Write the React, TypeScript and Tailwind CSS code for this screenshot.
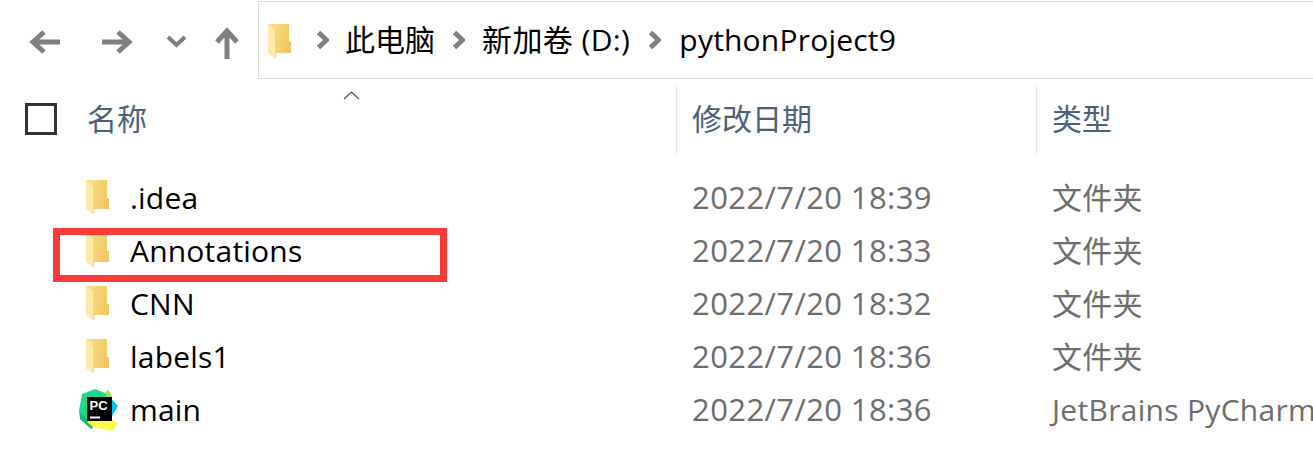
import React from "react";

function Folder({ className = "" }: { className?: string }) {
  const id = React.useId();
  return (
    <svg width="24" height="35" viewBox="0 0 24 35" className={className}>
      <defs>
        <linearGradient id={id} x1="0" y1="0" x2="1" y2="0.3">
          <stop offset="0" stopColor="#fbe08e" />
          <stop offset="1" stopColor="#f0c862" />
        </linearGradient>
      </defs>
      <path d="M0 0H21V18H23V29H7V34L0 29Z" fill={`url(#${id})`} />
      <path d="M0 0L7 5V34L0 29Z" fill="#fdeaa8" />
      <path d="M7 5L8 5V34L7 34Z" fill="#f7d77c" />
    </svg>
  );
}

function PyCharm() {
  return (
    <svg width="40" height="42" viewBox="0 0 40 42" className="shrink-0 block">
      <polygon points="0,22 3,5 16,0 26,4 29,1 33,8 14,38 12.500,40 1,30" fill="#21d789" />
      <polygon points="29,6 39,17 33,27 24,18" fill="#07c3f2" />
      <polygon points="1,24 8,30 8,33 14,38 12.500,40 1,30" fill="#10b981" />
      <polygon points="8,33 33,20 33,30 39,35 33,42 14,38" fill="#fcf84a" />
      <polygon points="26,4 29,1 33,8 28,8" fill="#9fe04f" />
      <rect x="8" y="8" width="25" height="24" fill="#000000" />
      <text x="10.500" y="20.500" fill="#ffffff" fontSize="13" fontWeight="700" fontFamily="'Liberation Sans', sans-serif">PC</text>
      <rect x="11" y="27.500" width="10" height="2" fill="#ffffff" />
    </svg>
  );
}

function Crumb() {
  return (
    <svg width="13" height="18" viewBox="0 0 13 18" className="shrink-0 block">
      <path d="M2.500 1.500L10.500 9L2.500 16.500" fill="none" stroke="#808080" strokeWidth="5" />
    </svg>
  );
}

const rows: { name: string; date: string; type: string; pc?: boolean }[] = [
  { name: ".idea", date: "2022/7/20 18:39", type: "文件夹" },
  { name: "Annotations", date: "2022/7/20 18:33", type: "文件夹" },
  { name: "CNN", date: "2022/7/20 18:32", type: "文件夹" },
  { name: "labels1", date: "2022/7/20 18:36", type: "文件夹" },
  { name: "main", date: "2022/7/20 18:36", type: "JetBrains PyCharm", pc: true },
];

export default function App() {
  return (
    <div className="relative w-[1313px] h-[452px] overflow-hidden bg-white text-[30px] font-['Open_Sans','Noto_Sans_CJK_SC',sans-serif]">
      <div className="flex h-[86px] pt-px">
        <div className="w-[258px] h-[78px] shrink-0 relative">
          <svg width="258" height="78" viewBox="0 0 258 78" className="block">
            <g fill="none" stroke="#808080" strokeWidth="5">
              <path d="M60 41H34M44 31L33 41L44 51" />
              <path d="M102 41H128M118 31L129 41L118 51" />
              <path d="M168 36L176.500 44L185 36" strokeWidth="4" />
              <path d="M227 58V31M217 41L227 30L237 41" />
            </g>
          </svg>
        </div>
        <div className="flex-1 h-[78px] border border-r-0 border-[#d9d9d9] flex items-center pl-[9px] text-black">
          <Folder className="shrink-0 mt-[3px]" />
          <span className="ml-[24px]"><Crumb /></span>
          <span className="ml-[16px] leading-none">此电脑</span>
          <span className="ml-[17px]"><Crumb /></span>
          <span className="ml-[17px] leading-none tracking-[0.4px]">新加卷 (D:)</span>
          <span className="ml-[18px]"><Crumb /></span>
          <span className="ml-[18px] leading-none tracking-[0.2px]">pythonProject9</span>
        </div>
      </div>

      <div className="flex h-[69px] text-[#4c607a] relative">
        <div className="w-[676px] shrink-0 flex items-center pl-[25px] pb-[3px]">
          <div className="w-8 h-8 border-[3px] border-[#333333] shrink-0" />
          <span className="ml-[30px] leading-none">名称</span>
        </div>
        <div className="w-[360px] shrink-0 border-l border-[#e5e5e5] flex items-center pl-[15px] pb-[3px]">
          <span className="leading-none">修改日期</span>
        </div>
        <div className="flex-1 border-l border-[#e5e5e5] flex items-center pl-[15px] pb-[3px]">
          <span className="leading-none">类型</span>
        </div>
        <svg width="17" height="9" viewBox="0 0 17 9" className="absolute left-[343px] top-[5px]">
          <path d="M1 8L8.500 1L16 8" fill="none" stroke="#555555" strokeWidth="1.200" />
        </svg>
      </div>

      <div className="flex flex-col pt-[16px]">
        {rows.map((r) => (
          <div key={r.name} className="flex h-[53px] items-center">
            <div className="w-[677px] shrink-0 flex items-center h-full">
              <div className="w-[130px] shrink-0 flex justify-start">
                {r.pc ? <span className="ml-[79px]"><PyCharm /></span> : <Folder className="ml-[86px]" />}
              </div>
              <span className="text-black leading-none tracking-[0.2px]">{r.name}</span>
            </div>
            <div className="w-[360px] shrink-0 pl-[15px] text-[#6d6d6d] text-[31px] tracking-[0.4px] leading-none whitespace-nowrap">{r.date}</div>
            <div className="flex-1 pl-[15px] text-[#6d6d6d] tracking-[0.3px] leading-none whitespace-nowrap">{r.type}</div>
          </div>
        ))}
      </div>

      <div className="absolute left-[53px] top-[228px] w-[394px] h-[54px] border-[7px] border-[#fb3a3a]" />
    </div>
  );
}
